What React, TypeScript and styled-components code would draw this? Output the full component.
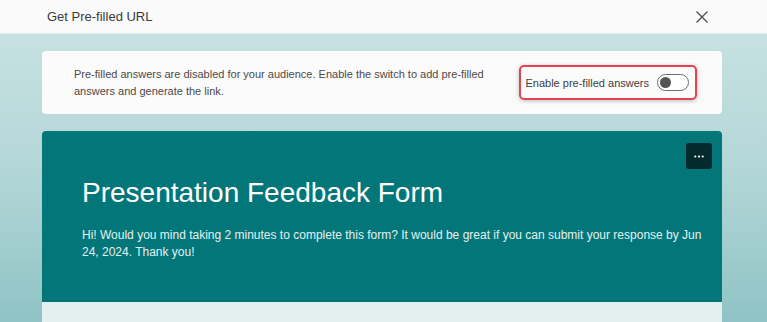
import React from "react";
import styled, { createGlobalStyle } from "styled-components";

const Global = createGlobalStyle`
  html, body { margin: 0; padding: 0; }
  body {
    width: 767px;
    height: 322px;
    overflow: hidden;
    font-family: "Liberation Sans", Arial, sans-serif;
    background: #fafafa;
  }
  * { box-sizing: border-box; }
`;

const Page = styled.div`
  display: flex;
  flex-direction: column;
  width: 767px;
  height: 322px;
`;

const Header = styled.header`
  flex: 0 0 34px;
  display: flex;
  align-items: center;
  justify-content: space-between;
  padding: 1px 59px 0 47px;
  background: #fafafa;
  border-bottom: 1px solid #e3ecec;
`;

const HeaderTitle = styled.h1`
  margin: 0;
  font-size: 13px;
  font-weight: 400;
  color: #3b3b3b;
  line-height: 16px;
`;

const CloseButton = styled.button`
  width: 12px;
  height: 12px;
  padding: 0;
  border: 0;
  background: transparent;
  display: flex;
  align-items: center;
  justify-content: center;
  color: #4a4a4a;
`;

const Body = styled.main`
  flex: 1;
  display: flex;
  flex-direction: column;
  gap: 17px;
  padding: 17px 45px 0 42px;
  background: linear-gradient(180deg, #c7e1e1 0%, #b4d7d8 45%, #8fc3c5 100%);
`;

const InfoCard = styled.section`
  flex: 0 0 63px;
  display: flex;
  align-items: center;
  justify-content: space-between;
  padding: 0 25px 0 32px;
  background: #fbfbfb;
  border-radius: 4px;
`;

const InfoText = styled.p`
  margin: 0;
  font-size: 11px;
  line-height: 16.5px;
  color: #4d4a48;
  max-width: 430px;
`;

const Highlight = styled.div`
  display: flex;
  align-items: center;
  gap: 8px;
  height: 35px;
  padding: 0 6px 0 4px;
  border: 2px solid #e5434f;
  border-radius: 5px;
  box-shadow: 0 1px 4px rgba(0, 0, 0, 0.25);
`;

const ToggleLabel = styled.span`
  font-size: 11px;
  color: #404040;
`;

const Toggle = styled.span<{ $on?: boolean }>`
  position: relative;
  width: 32px;
  height: 17px;
  border: 1px solid #6b6b6b;
  border-radius: 9px;
  background: #fff;
  &::after {
    content: "";
    position: absolute;
    top: 2px;
    left: ${(p) => (p.$on ? "17px" : "2px")};
    width: 11px;
    height: 11px;
    border-radius: 50%;
    background: #545454;
  }
`;

const FormCard = styled.section`
  flex: 1;
  display: flex;
  flex-direction: column;
  border-radius: 4px 4px 0 0;
  overflow: hidden;
  background: #e4f0f0;
`;

const Banner = styled.div`
  position: relative;
  flex: 0 0 171px;
  padding: 45px 16px 0 40px;
  background: #037679;
`;

const MoreButton = styled.button`
  position: absolute;
  top: 12px;
  right: 10px;
  width: 26px;
  height: 26px;
  padding: 0;
  border: 0;
  border-radius: 3px;
  background: #032a2c;
  display: flex;
  align-items: center;
  justify-content: center;
`;

const FormTitle = styled.h2`
  margin: 0;
  font-size: 28px;
  line-height: 33.6px;
  font-weight: 400;
  color: #ffffff;
`;

const Description = styled.p`
  margin: 17px 0 0;
  font-size: 12px;
  line-height: 17px;
  color: #e3f1f1;
`;

export default function App() {
  return (
    <Page>
      <Global />
      <Header>
        <HeaderTitle>Get Pre-filled URL</HeaderTitle>
        <CloseButton aria-label="Close">
          <svg width="12" height="12" viewBox="0 0 12 12">
            <path d="M0.5 0.5L11.5 11.5M11.5 0.5L0.5 11.5" stroke="currentColor" strokeWidth="1.2" />
          </svg>
        </CloseButton>
      </Header>
      <Body>
        <InfoCard>
          <InfoText>
            Pre-filled answers are disabled for your audience. Enable the switch to add pre-filled
            answers and generate the link.
          </InfoText>
          <Highlight>
            <ToggleLabel>Enable pre-filled answers</ToggleLabel>
            <Toggle />
          </Highlight>
        </InfoCard>
        <FormCard>
          <Banner>
            <MoreButton aria-label="More options">
              <svg width="10" height="3" viewBox="0 0 10 3">
                <circle cx="1.3" cy="1.5" r="1.1" fill="#fff" />
                <circle cx="5" cy="1.5" r="1.1" fill="#fff" />
                <circle cx="8.7" cy="1.5" r="1.1" fill="#fff" />
              </svg>
            </MoreButton>
            <FormTitle>Presentation Feedback Form</FormTitle>
            <Description>
              Hi! Would you mind taking 2 minutes to complete this form? It would be great if you can
              submit your response by Jun 24, 2024. Thank you!
            </Description>
          </Banner>
        </FormCard>
      </Body>
    </Page>
  );
}
